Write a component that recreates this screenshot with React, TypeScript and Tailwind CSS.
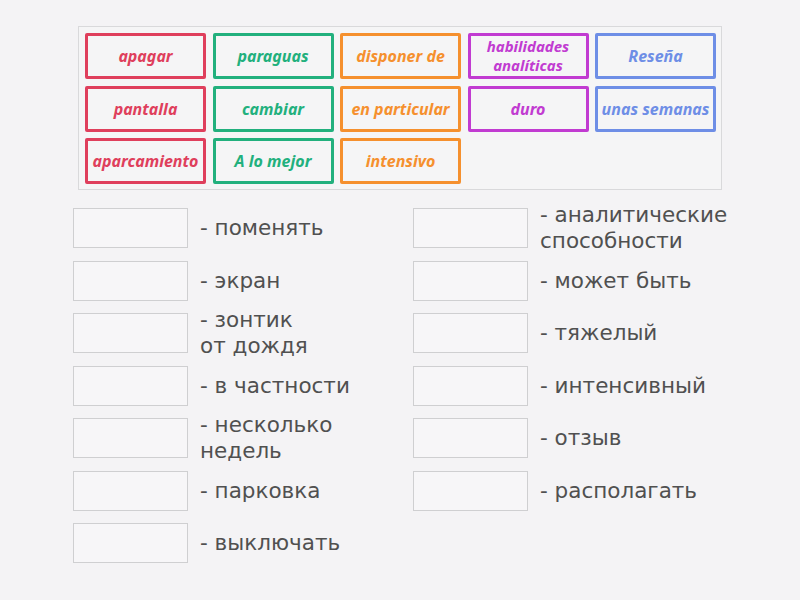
import React from "react";

type Tile = { text: string; color: string; small?: boolean };

const tiles: Tile[] = [
  { text: "apagar", color: "red" },
  { text: "paraguas", color: "green" },
  { text: "disponer de", color: "orange" },
  { text: "habilidades analíticas", color: "purple", small: true },
  { text: "Reseña", color: "blue" },
  { text: "pantalla", color: "red" },
  { text: "cambiar", color: "green" },
  { text: "en particular", color: "orange" },
  { text: "duro", color: "purple" },
  { text: "unas semanas", color: "blue" },
  { text: "aparcamiento", color: "red" },
  { text: "A lo mejor", color: "green" },
  { text: "intensivo", color: "orange" },
];

const colorClass: Record<string, string> = {
  red: "border-[#df3f5c] text-[#df3f5c]",
  green: "border-[#22b07d] text-[#22b07d]",
  orange: "border-[#f5902e] text-[#f5902e]",
  purple: "border-[#c13bd1] text-[#c13bd1]",
  blue: "border-[#6e8ee6] text-[#6e8ee6]",
};

const left = [
  "- поменять",
  "- экран",
  "- зонтик\nот дождя",
  "- в частности",
  "- несколько\nнедель",
  "- парковка",
  "- выключать",
];
const right = [
  "- аналитические\nспособности",
  "- может быть",
  "- тяжелый",
  "- интенсивный",
  "- отзыв",
  "- располагать",
];

function Row({ text }: { text: string }) {
  return (
    <div className="flex h-[40px] items-center">
      <div className="h-[40px] w-[115px] shrink-0 border border-[#cfcfd1] bg-[#f7f6f8]" />
      <div
        className="ml-[12px] whitespace-pre text-[21.5px] leading-[26px] text-[#505050]"
        style={{ fontFamily: '"DejaVu Sans", sans-serif' }}
      >
        {text}
      </div>
    </div>
  );
}

export default function App() {
  return (
    <div className="h-[600px] w-[800px] overflow-hidden bg-[#f4f3f5] pt-[26px]">
      <div className="ml-[78px] grid h-[164px] w-[644px] grid-cols-[repeat(5,121px)] grid-rows-[repeat(3,46px)] gap-x-[6.5px] gap-y-[6.5px] border border-[#d9d9db] bg-[#f5f5f6] p-[6px]">
        {tiles.map((t, i) => (
          <div
            key={i}
            className={`flex items-center justify-center rounded-[2px] border-[3px] text-center italic font-bold ${colorClass[t.color]} ${
              t.small ? "text-[15px] leading-[19px]" : "text-[16px]"
            }`}
            style={{ fontFamily: '"Noto Sans", sans-serif' }}
          >
            {t.small ? (
              <span>
                habilidades
                <br />
                analíticas
              </span>
            ) : (
              t.text
            )}
          </div>
        ))}
      </div>
      <div className="ml-[73px] mt-[18px] flex">
        <div className="flex w-[340px] flex-col gap-[12.5px]">
          {left.map((t) => (
            <Row key={t} text={t} />
          ))}
        </div>
        <div className="flex flex-col gap-[12.5px]">
          {right.map((t) => (
            <Row key={t} text={t} />
          ))}
        </div>
      </div>
    </div>
  );
}
